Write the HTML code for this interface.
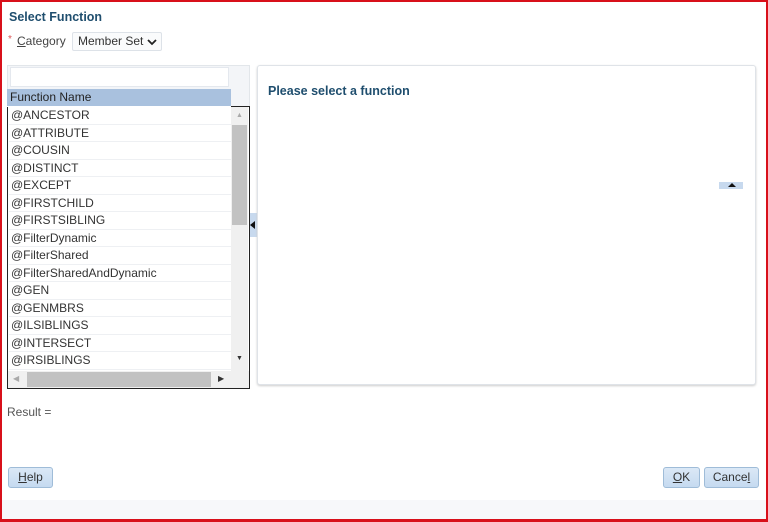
<!DOCTYPE html>
<html><head><style>
*{margin:0;padding:0;box-sizing:border-box}
body{width:768px;height:522px;background:#fff;font-family:"Liberation Sans",sans-serif;font-size:12px;color:#333;position:relative;overflow:hidden}
.frame{position:absolute;left:0;top:0;width:768px;height:522px;border:2px solid #d8101a;border-bottom-width:3px;background:#fff}
.abs{position:absolute}
.title{left:9px;top:10px;font-weight:bold;font-size:12.5px;color:#1f4e6e}
.row{position:absolute;left:9px;width:222px;height:17.5px;line-height:17px;border-bottom:1px solid #eef0f3;padding-left:2px;font-size:12px;color:#333}
.btn{position:absolute;height:21px;border:1px solid #9fbcd8;border-radius:3px;background:linear-gradient(#dbe8f6,#c5daf0);text-align:center;line-height:19px;color:#333}
</style></head><body>
<div class="frame"></div>
<div class="abs title">Select Function</div>
<div class="abs" style="left:8px;top:34px;color:#d55;font-size:10px">*</div>
<div class="abs" style="left:17px;top:34px;color:#444"><u>C</u>ategory</div>
<div class="abs" style="left:72px;top:32px;width:90px;height:19px;border:1px solid #dde2e8;border-radius:2px;background:#fafbfc;padding-left:5px;line-height:17px;color:#333">Member Set <svg width="10" height="8" style="vertical-align:middle" viewBox="0 0 10 8"><path d="M1 2l4 4 4-4" stroke="#222" stroke-width="1.8" fill="none"/></svg></div>
<!-- left panel -->
<div class="abs" style="left:7px;top:65px;width:243px;height:42px;background:#f3f5f8;border:1px solid #e2e6ea;border-bottom:none"></div>
<div class="abs" style="left:10px;top:67px;width:219px;height:20px;background:#fff;border:1px solid #e4e8ee"></div>
<div class="abs" style="left:7px;top:89px;width:224px;height:17px;background:#a9c1de;line-height:17px;padding-left:3px;color:#222">Function Name</div>
<div class="abs" style="left:7px;top:106px;width:243px;height:283px;border:1px solid #222;border-top:1px solid #222;background:#fff"></div>
<div class="abs" style="left:7px;top:106px;width:224px;height:1px;background:#fff"></div>
<div class="row" style="top:107px">@ANCESTOR</div>
<div class="row" style="top:124.5px">@ATTRIBUTE</div>
<div class="row" style="top:142px">@COUSIN</div>
<div class="row" style="top:159.5px">@DISTINCT</div>
<div class="row" style="top:177px">@EXCEPT</div>
<div class="row" style="top:194.5px">@FIRSTCHILD</div>
<div class="row" style="top:212px">@FIRSTSIBLING</div>
<div class="row" style="top:229.5px">@FilterDynamic</div>
<div class="row" style="top:247px">@FilterShared</div>
<div class="row" style="top:264.5px">@FilterSharedAndDynamic</div>
<div class="row" style="top:282px">@GEN</div>
<div class="row" style="top:299.5px">@GENMBRS</div>
<div class="row" style="top:317px">@ILSIBLINGS</div>
<div class="row" style="top:334.5px">@INTERSECT</div>
<div class="row" style="top:352px">@IRSIBLINGS</div>
<!-- vscroll -->
<div class="abs" style="left:231px;top:107px;width:17px;height:264px;background:#f0f0f0"></div>
<div class="abs" style="left:236px;top:112px;color:#aaa;font-size:7px">▲</div>
<div class="abs" style="left:232px;top:125px;width:15px;height:100px;background:#c2c2c2"></div>
<div class="abs" style="left:236px;top:355px;color:#333;font-size:7px">▼</div>
<!-- hscroll -->
<div class="abs" style="left:8px;top:371px;width:241px;height:17px;background:#f0f0f0"></div>
<div class="abs" style="left:27px;top:372px;width:184px;height:15px;background:#c2c2c2"></div>
<div class="abs" style="left:13px;top:374px;color:#aaa;font-size:8px">◀</div>
<div class="abs" style="left:218px;top:374px;color:#333;font-size:8px">▶</div>
<!-- splitter tab -->
<div class="abs" style="left:250px;top:213px;width:7px;height:24px;background:#c7d9ee"></div>
<div class="abs" style="left:250px;top:221px;width:0;height:0;border-top:4px solid transparent;border-bottom:4px solid transparent;border-right:5px solid #111"></div>
<!-- right panel -->
<div class="abs" style="left:257px;top:65px;width:499px;height:320px;border:1px solid #dfe3e8;border-radius:3px;background:#fff;box-shadow:0 1px 2px #ccc"></div>
<div class="abs" style="left:268px;top:84px;font-weight:bold;color:#1f4e6e;font-size:12.5px">Please select a function</div>
<div class="abs" style="left:719px;top:182px;width:24px;height:7px;background:#c7d9ee"></div>
<div class="abs" style="left:728px;top:183px;width:0;height:0;border-left:4px solid transparent;border-right:4px solid transparent;border-bottom:4px solid #111"></div>
<div class="abs" style="left:7px;top:405px;color:#555">Result =</div>
<div class="btn" style="left:8px;top:467px;width:45px"><u>H</u>elp</div>
<div class="btn" style="left:663px;top:467px;width:37px"><u>O</u>K</div>
<div class="btn" style="left:704px;top:467px;width:55px">Cance<u>l</u></div>
<div class="abs" style="left:2px;top:500px;width:764px;height:19px;background:#f7f8fa"></div>
</body></html>
